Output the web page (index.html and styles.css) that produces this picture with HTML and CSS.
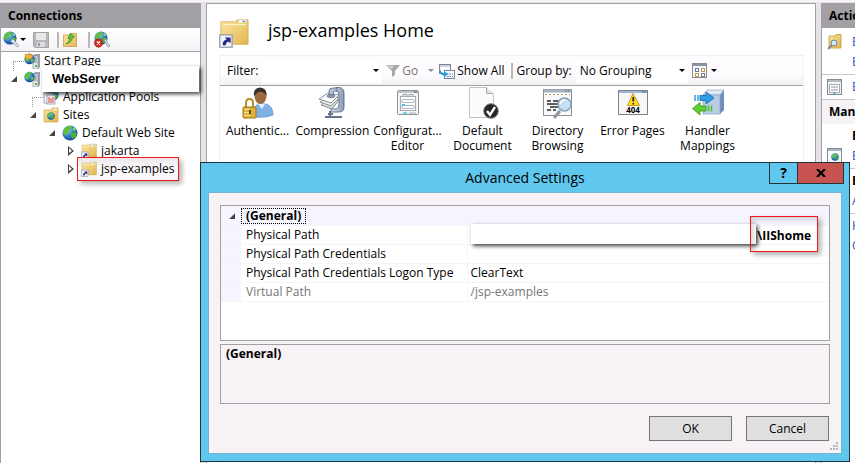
FILE: index.html
```
<!DOCTYPE html>
<html lang="en">
<head>
  <meta charset="utf-8">
  <title>jsp-examples Home</title>
  <link rel="stylesheet" href="styles.css">
</head>
<body>
  <!-- shared shapes -->
  <svg class="defs" width="0" height="0" aria-hidden="true">
    <defs>
      <linearGradient id="gold" x1="0" y1="0" x2="1" y2="1">
        <stop offset="0" stop-color="#fbe7a3"/>
        <stop offset="1" stop-color="#e2b54f"/>
      </linearGradient>
      <radialGradient id="sea" cx="0.35" cy="0.3" r="0.8">
        <stop offset="0" stop-color="#9fd8f7"/>
        <stop offset="0.5" stop-color="#2f7fd0"/>
        <stop offset="1" stop-color="#123a86"/>
      </radialGradient>
      <linearGradient id="steel" x1="0" y1="0" x2="1" y2="0">
        <stop offset="0" stop-color="#e8eef6"/>
        <stop offset="1" stop-color="#8595b0"/>
      </linearGradient>
    </defs>
    <symbol id="globe" viewBox="0 0 16 16">
      <circle cx="8" cy="8" r="7.5" fill="url(#sea)"/>
      <path d="M2 4 Q5 0 9 1 L10 3 L7 5 L8 7 L5 8 L4 11 L1 8 Z" fill="#5fc13a"/>
      <path d="M9 8 L13 7 L15 9 Q14 13 11 14 L9 12 Z" fill="#4fae32"/>
      <path d="M11 2 L14 4 L13 6 L11 5 Z" fill="#8fdc5a"/>
    </symbol>
    <symbol id="folder" viewBox="0 0 16 16">
      <path d="M1 2 H9.500 V1 H15.500 V14 H8 L1 12 Z" fill="url(#gold)" stroke="#cfa64a" stroke-width="0.4"/>
      <path d="M10.500 1.800 H14.500" stroke="#fff" stroke-width="1.2"/>
      <path d="M12.500 1.800 H14" stroke="#4aa3e0" stroke-width="0.8"/>
      <path d="M2 3.500 H14.500" stroke="#fdf2c6" stroke-width="0.6"/>
      <rect x="0.4" y="9" width="6.6" height="6.6" fill="#f2f3f8" stroke="#9aa0b4" stroke-width="0.7"/>
      <path d="M2 14.5 Q1.8 12 4 11.6 L3.2 10.4 H6.2 V13.4 L5.2 12.6 Q3.6 12.8 3.6 14.5 Z" fill="#252c86"/>
    </symbol>
    <symbol id="server" viewBox="0 0 16 16">
      <path d="M9 3 L11 1 H16 V14 L14 16 H9 Z" fill="#98a3ae"/>
      <rect x="9" y="3" width="5" height="13" fill="#dfe5ea" stroke="#7e8993" stroke-width="0.6"/>
      <path d="M10 5 H13 M10 7 H13 M10 9 H13" stroke="#66717c" stroke-width="0.8"/>
      <rect x="11" y="12" width="2" height="2" fill="#5fc13a"/>
      <circle cx="5.5" cy="6" r="5.2" fill="url(#sea)"/>
      <path d="M1 4 Q4 0 7 1 L7 3 L5 5 L5 7 L3 9 L1 7 Z" fill="#5fc13a"/>
      <path d="M7 6 L10 6 L9 9 L7 10 Z" fill="#5fc13a"/>
    </symbol>
  </svg>

  <div class="console">
    <aside class="panel connections">
      <h2 class="panel-title">Connections</h2>
      <div class="toolbar">
        <button class="tool" aria-label="Connect">
          <svg width="17" height="17" viewBox="0 0 17 17"><use href="#globe" width="14" height="14"/><path d="M8 9 L10 8 L12 10 L16 15 L14 16 L10 12 L8 11 Z" fill="#d9e4ee" stroke="#8298ab" stroke-width="0.7"/></svg>
        </button>
        <span class="caret"></span>
        <button class="tool save" aria-label="Save" disabled>
          <svg width="16" height="16" viewBox="0 0 16 16"><path d="M0.5 0.5 H15.5 V15.5 H2 L0.5 14 Z" fill="#b9b7ba" stroke="#a3a1a5"/><rect x="3" y="1" width="10" height="7" fill="#e9e7ea"/><rect x="4" y="10" width="8" height="5" fill="#dcdadd"/><rect x="5" y="11" width="2" height="3" fill="#9a989c"/></svg>
        </button>
        <span class="divider"></span>
        <button class="tool" aria-label="Up">
          <svg width="15" height="15" viewBox="0 0 15 15"><path d="M0.5 3 H8 V1.5 H13.5 V14.5 H0.5 Z" fill="url(#gold)" stroke="#c8a04c" stroke-width="0.8"/><path d="M3 12 Q7 10 7 6 L5 6.5 L7.5 1 L11.5 5 L9.5 5 Q9 10.5 3 12 Z" fill="#62c63a" stroke="#2f8a23" stroke-width="0.7"/></svg>
        </button>
        <span class="divider far"></span>
        <button class="tool" aria-label="Disconnect">
          <svg width="17" height="17" viewBox="0 0 17 17"><use href="#globe" width="14" height="14"/><path d="M10 9 L12 8 L13 11 L16 15 L14 16 Z" fill="#d9e4ee" stroke="#8298ab" stroke-width="0.7"/><circle cx="4.5" cy="12" r="4.2" fill="#d2281e" stroke="#9a1710" stroke-width="0.5"/><path d="M3 10.500 L6 13.500 M6 10.500 L3 13.500" stroke="#fff" stroke-width="1.4"/></svg>
        </button>
      </div>
      <ul class="tree">
        <li class="level-1">
          <span class="branch down"></span>
          <svg class="node" viewBox="0 0 16 16"><use href="#server" width="16" height="16"/><path d="M1 1 L3 2 L5 0 L6 2 L9 2 L8 5 L5 6 L2 6 Z" fill="#f6b23a" stroke="#d98514" stroke-width="0.6"/></svg>
          Start Page
        </li>
        <li class="level-1">
          <span class="toggle open"></span>
          <svg class="node"><use href="#server"/></svg>
        </li>
        <li class="level-2">
          <span class="branch down"></span>
          <svg class="node" viewBox="0 0 16 16"><use href="#globe" x="4" width="12" height="12"/><rect x="1" y="4" width="8" height="10" fill="#f5f6fa" stroke="#8f97ab" stroke-width="0.8"/><rect x="4" y="6" width="8" height="9" fill="#fff" stroke="#8f97ab" stroke-width="0.8"/><path d="M6 8 V14 M8 9 V14 M10 8 V14" stroke="#cf3d2c"/></svg>
          Application Pools
        </li>
        <li class="level-2">
          <span class="toggle open"></span>
          <svg class="node" viewBox="0 0 16 16"><path d="M1 3 H9 V1 H15 V15 H1 Z" fill="url(#gold)" stroke="#cfa64a" stroke-width="0.7"/><path d="M10 2.5 H14" stroke="#fff"/><use href="#globe" x="4" y="5" width="8" height="8"/></svg>
          Sites
        </li>
        <li class="level-3">
          <span class="toggle open"></span>
          <svg class="node"><use href="#globe"/></svg>
          Default Web Site
        </li>
        <li class="level-4">
          <span class="toggle"></span>
          <svg class="node"><use href="#folder"/></svg>
          jakarta
        </li>
        <li class="level-4">
          <span class="toggle"></span>
          <span class="marked">
            <svg class="node"><use href="#folder"/></svg>
            jsp-examples
          </span>
        </li>
      </ul>
      <div class="cover server-name">WebServer</div>
    </aside>

    <main class="panel home">
      <header class="home-title">
        <svg width="30" height="30"><use href="#folder"/></svg>
        <h1>jsp-examples Home</h1>
      </header>
      <section class="features">
        <div class="filter-bar">
          <label for="filter">Filter:</label>
          <span class="combo"><input id="filter" type="text"><span class="caret"></span></span>
          <button class="tool go" disabled>
            <svg width="14" height="13" viewBox="0 0 14 13"><path d="M0 1 H14 L9 7 V11 L6 13 V7 Z" fill="#a9a7aa"/><path d="M1 1.5 H8 L6 5 Z" fill="#cfcdd0"/></svg>
            Go
          </button>
          <span class="caret dim"></span>
          <button class="tool">
            <svg width="16" height="16" viewBox="0 0 16 16"><rect x="0.5" y="1.5" width="11" height="9" fill="#fafbfd" stroke="#7b8594"/><path d="M1 3 H11" stroke="#a4adba"/><rect x="5.5" y="7.5" width="10" height="8" fill="#fafbfd" stroke="#7b8594"/><path d="M8 11 H14 M8 13.5 H14" stroke="#5577b8" stroke-dasharray="1.5 1"/><path d="M1 6 Q2 10 5 10 V8 L9 11 L5 14.5 V12.5 Q0 12 1 6 Z" fill="#2a9be0"/></svg>
            Show All
          </button>
          <span class="divider"></span>
          <label for="group">Group by:</label>
          <span class="combo group"><select id="group"><option>No Grouping</option></select><span class="caret"></span></span>
          <button class="tool" aria-label="View">
            <svg width="15" height="15" viewBox="0 0 15 15"><rect x="0.5" y="0.5" width="14" height="14" fill="#f7f7f9" stroke="#8b898f"/><path d="M1 2 H14" stroke="#8b94a5" stroke-width="2"/><g fill="#fff" stroke="#6c7aa4"><rect x="3.5" y="5.5" width="3" height="3"/><rect x="9.5" y="5.5" width="3" height="3" stroke="#c99a52"/><rect x="3.5" y="10.5" width="3" height="3" stroke="#c99a52"/><rect x="9.5" y="10.5" width="3" height="3"/></g></svg>
          </button>
          <span class="caret"></span>
        </div>
        <ul class="feature-list">
          <li>
            <svg width="32" height="32" viewBox="0 0 32 32"><path d="M12 30 Q10 19 17 17 L24 17 Q31 19 31 28 Q24 31 12 30 Z" fill="#7fb2e4" stroke="#5a8dc6" stroke-width="0.7"/><path d="M16 17 L20 22 L23 17 Z" fill="#e8f2fc"/><ellipse cx="18.500" cy="9" rx="6" ry="8" fill="#9b6a41"/><path d="M12 9 Q11 1 18 0.500 Q25 1 24.500 9 Q22 4 16 5 Z" fill="#38302c"/><path d="M4 20 V16 Q4 12 7.500 12 Q11 12 11 16 V20" fill="none" stroke="#b58d2c" stroke-width="2"/><rect x="1" y="20" width="13" height="11" rx="1" fill="#dfb23e" stroke="#9a7419"/><path d="M2 22.500 H8 M2 25.500 H8 M2 28.500 H8" stroke="#fbe08a"/><rect x="7" y="23" width="2" height="4" fill="#5f4810"/></svg>
            Authentic...
          </li>
          <li>
            <svg width="32" height="32" viewBox="0 0 32 32"><path d="M17 3 Q17 0.500 20 0.500 H22 Q27 1 27 6 V20 Q27 25 22 25 H14 V22 H19 Q22 21 22 18 V8 Q22 4 19 4 Z" fill="url(#steel)" stroke="#5a6b88" stroke-width="0.9"/><path d="M4 18 L15 22 L22 13 L12 11 Z" fill="#dcdde1" stroke="#77787e" stroke-width="0.8"/><path d="M3 15 L14 19 L22 11 L12 9 Z" fill="#eeeef1" stroke="#77787e" stroke-width="0.8"/><path d="M2 12 L14 16 L22 8 L11 6 Z" fill="#fbfbfc" stroke="#77787e" stroke-width="0.8"/><path d="M12 9 V4 Q12 1 16 1 H20 V4 H17 L16 9 Z" fill="#b4c1d5" stroke="#5a6b88" stroke-width="0.8"/><ellipse cx="14" cy="9" rx="4" ry="1.500" fill="#8f9cb3" stroke="#4f5f7b" stroke-width="0.700"/><path d="M13 24 V30 M8 30 H25 M11 27 H16" stroke="#65748e" stroke-width="2"/></svg>
            Compression
          </li>
          <li>
            <svg width="32" height="32" viewBox="0 0 32 32"><rect x="5.500" y="3.500" width="21" height="24" rx="1" fill="#f4f5f6" stroke="#8d9299"/><path d="M6 5 H26" stroke="#bfc4cb" stroke-width="2"/><path d="M22 5 H25" stroke="#4e545c"/><rect x="8.500" y="9.500" width="15" height="14" fill="#fff" stroke="#a5abb2"/><path d="M11 9 V7.500 H15 V9 M17 9 V7.500 H21 V9" stroke="#9ca2aa" fill="none"/><path d="M10 12.500 H22 V15.500 H10 Z M10 18.500 H22 V21.500 H10 Z" fill="#fff" stroke="#b4bac1"/><path d="M10 18 H13" stroke="#3fc9e8" stroke-width="2"/><path d="M11 26 H15" stroke="#3fc9e8" stroke-width="1.500"/><path d="M17 26 H24" stroke="#a4a9b0"/></svg>
            Configurat... Editor
          </li>
          <li>
            <svg width="32" height="32" viewBox="0 0 32 32"><path d="M2.500 0.500 H19 L26.500 7 V30.500 H2.500 Z" fill="#fcfbfd" stroke="#c3c1c6"/><path d="M19.500 0.500 V6.500 H26" fill="#e6e4e9" stroke="#a9a7ad"/><circle cx="24" cy="24" r="7.300" fill="#252528" stroke="#808084"/><path d="M20 24 L23 28 L28 20" fill="none" stroke="#fff" stroke-width="2.400"/></svg>
            Default Document
          </li>
          <li>
            <svg width="32" height="32" viewBox="0 0 32 32"><rect x="1.500" y="2.500" width="28" height="26" fill="#fafafa" stroke="#8b8f96"/><path d="M2 4 H29" stroke="#a8b2c2" stroke-width="3"/><path d="M23 4 H28" stroke="#3c62a0" stroke-dasharray="1.500 1"/><path d="M3 7.500 H28" stroke="#b69f68" stroke-dasharray="2 2"/><path d="M5 14 H9 M11 14 H19 M5 17 H17 M8 20 H17 M5 23 H9 M11 23 H14" stroke="#2b2b2e" stroke-width="1.300"/><path d="M18 24 L12 31" stroke="#8e949d" stroke-width="3"/><circle cx="22.500" cy="17.500" r="6.500" fill="#c2e1f8" stroke="#8ba0b7" stroke-width="1.500"/><path d="M18 17 Q19 13 23 13" stroke="#fff" stroke-width="1.500" fill="none"/></svg>
            Directory Browsing
          </li>
          <li>
            <svg width="32" height="32" viewBox="0 0 32 32"><rect x="1.500" y="3.500" width="29" height="24" fill="#f6f6f8" stroke="#7c8088"/><path d="M2 5 H30" stroke="#a3b5d0" stroke-width="2"/><path d="M25 5 H29" stroke="#31568f" stroke-dasharray="1.500 1"/><path d="M16 6.500 L22.500 18.500 H10.500 Z" fill="#ffdb29" stroke="#c9a012" stroke-linejoin="round"/><path d="M16.300 10 V14.500 M16.300 16 V17.500" stroke="#222" stroke-width="1.700"/><text x="16" y="26" text-anchor="middle" class="code">404</text></svg>
            Error Pages
          </li>
          <li>
            <svg width="32" height="32" viewBox="0 0 32 32"><path d="M11 8 L15 3 H32 L28 8 Z" fill="#dfe9f6" stroke="#8ea4c2" stroke-width="0.700"/><path d="M28 8 L32 3 V23 L28 27 Z" fill="#6f8fba"/><rect x="11" y="8" width="17" height="19" fill="#b9cde6" stroke="#86a0c3" stroke-width="0.700"/><path d="M8 8.500 H14 V5 L22 11 L14 17 V13.500 H8 Z" fill="#2e9fe4" stroke="#1667ae" stroke-width="0.800"/><path d="M3 8 V14 M6 8 V14" stroke="#2e9fe4" stroke-width="1.500"/><path d="M14 19 H8 V15.500 L0.500 21.500 L8 28 V24 H14 Z" fill="#63cf35" stroke="#36931b" stroke-width="0.800"/><path d="M16.500 18.500 V24.500 M19.500 18.500 V24.500" stroke="#4fbf29" stroke-width="1.500"/></svg>
            Handler Mappings
          </li>
        </ul>
      </section>
    </main>

    <aside class="panel actions">
      <h2 class="panel-title">Actions</h2>
      <div class="action-group first">
        <svg width="16" height="16" viewBox="0 0 16 16"><path d="M2 2 H9 V0.500 H14 V14 H2 Z" fill="url(#gold)" stroke="#c8982f" stroke-width="0.800"/><path d="M5 11 L1 15" stroke="#7b8797" stroke-width="2"/><circle cx="7" cy="9" r="3" fill="#cfe8fb" stroke="#6f8298"/></svg>
        <a href="#">Explore</a>
        <a href="#">Edit Permissions...</a>
      </div>
      <div class="action-group">
        <svg width="16" height="16" viewBox="0 0 16 16"><rect x="0.500" y="0.500" width="14" height="15" fill="#f2f4f5" stroke="#868b92"/><path d="M1 2 H14" stroke="#b5bac1" stroke-width="2"/><rect x="2.500" y="5.500" width="10" height="8" fill="#fff" stroke="#a4aab1"/><path d="M4 8 H11 M4 11 H11" stroke="#8d949d"/><path d="M6 14.500 H9" stroke="#3fc9e8"/></svg>
        <a href="#">Basic Settings...</a>
      </div>
      <h3>Manage Virtual Directory</h3>
      <div class="action-group">
        <strong>Browse</strong>
        <svg width="16" height="16" viewBox="0 0 16 16"><rect x="0.500" y="0.500" width="14" height="14" fill="#fafafa" stroke="#868b92"/><path d="M1 2 H14" stroke="#a9b6ca" stroke-width="2"/><use href="#globe" x="4" y="5" width="8" height="8"/></svg>
        <a href="#">Browse</a>
      </div>
      <div class="action-group">
        <strong>Edit</strong>
        <a href="#">Advanced Settings...</a>
      </div>
      <div class="action-group last">
        <a href="#">Help</a>
        <a href="#">Online Help</a>
      </div>
    </aside>
  </div>

  <div class="dialog" role="dialog" aria-labelledby="dialog-title">
    <header class="dialog-bar">
      <h2 id="dialog-title">Advanced Settings</h2>
      <div class="window-buttons">
        <button class="help">?</button>
        <button class="close" aria-label="Close">
          <svg width="10" height="8" viewBox="0 0 10 8"><path d="M1 0 L9 8 M9 0 L1 8" stroke="#000" stroke-width="2.200"/></svg>
        </button>
      </div>
    </header>
    <div class="dialog-body">
      <div class="grid-box">
        <table>
          <colgroup>
            <col class="gutter-col">
            <col class="name-col">
            <col>
          </colgroup>
          <tr class="category">
            <td class="gutter"><span class="toggle open"></span></td>
            <th colspan="2"><span>(General)</span></th>
          </tr>
          <tr>
            <td class="gutter"></td>
            <td class="name">Physical Path</td>
            <td class="path"><span class="cover path-cover"></span><span class="path-end">\IIShome</span></td>
          </tr>
          <tr>
            <td class="gutter"></td>
            <td class="name">Physical Path Credentials</td>
            <td></td>
          </tr>
          <tr>
            <td class="gutter"></td>
            <td class="name">Physical Path Credentials Logon Type</td>
            <td>ClearText</td>
          </tr>
          <tr class="readonly">
            <td class="gutter"></td>
            <td class="name">Virtual Path</td>
            <td>/jsp-examples</td>
          </tr>
        </table>
      </div>
      <div class="description">(General)</div>
      <div class="dialog-buttons">
        <button>OK</button>
        <button>Cancel</button>
      </div>
      <svg class="grip" width="9" height="9" viewBox="0 0 9 9"><path d="M6 1 h2 M6 4 h2 M3 4 h2 M6 7 h2 M3 7 h2 M0 7 h2" stroke="#b9b6bb" stroke-width="2"/></svg>
    </div>
  </div>
</body>
</html>
```
FILE: styles.css
```
* {
  box-sizing: border-box;
}
body {
  margin: 0;
  height: 100vh;
  overflow: hidden;
  background-color: #e5e3e8;
  border-top: 2px solid #f6f2f6;
  color: #000;
  font-family: "Open Sans", "Noto Sans", sans-serif;
  font-size: 12px;
  line-height: 18px;
}
h1, h2, h3, ul {
  margin: 0;
  padding: 0;
}
ul {
  list-style: none;
}
button, input, select {
  font: inherit;
  color: inherit;
}
svg {
  display: block;
  flex: none;
}
.defs {
  position: absolute;
}

/* three console panes */
.console {
  display: grid;
  grid-template-columns: 201px minmax(0, 1fr) 34px;
  grid-template-rows: minmax(0, 1fr);
  gap: 5px;
  height: 100%;
  padding-top: 1px;
}
.panel {
  position: relative;
  background-color: #fff;
  border: 1px solid #a3a0a5;
  border-bottom: none;
}
.panel-title {
  height: 24px;
  padding: 0 7px;
  background-color: #a3a0a5;
  font-size: 12px;
  line-height: 24px;
}
.toolbar {
  display: flex;
  align-items: center;
  height: 24px;
  padding-left: 2px;
  background: linear-gradient(#fff, #f6f2f6);
  border-bottom: 1px solid #a3a0a5;
}
.tool {
  display: flex;
  align-items: center;
  gap: 2px;
  padding: 0;
  border: none;
  background: none;
}
.tool:disabled {
  color: #77757a;
}
.tool.save {
  margin-left: 7px;
}
.caret {
  flex: none;
  border: 3px solid transparent;
  border-top-color: #000;
  border-bottom: none;
}
.caret.dim {
  border-top-color: #8d8b8f;
}
.divider {
  width: 2px;
  height: 16px;
  margin: 0 4px 0 8px;
  background-color: #bab8bc;
}
.divider.far {
  margin-left: 10px;
}

/* connection tree */
.tree li {
  display: flex;
  align-items: center;
  height: 18px;
  white-space: nowrap;
}
.node {
  width: 16px;
  height: 16px;
  margin-right: 4px;
}
.level-1 {
  padding-left: 10px;
}
.level-2 {
  padding-left: 29px;
}
.level-3 {
  padding-left: 48px;
}
.level-4 {
  padding-left: 67px;
}
.branch {
  width: 11px;
  height: 10px;
  margin: 10px 0 0 2px;
  border-top: 1px dotted #97959a;
  border-left: 1px dotted #97959a;
}
.toggle {
  position: relative;
  flex: none;
  width: 13px;
  height: 10px;
}
.toggle::before {
  content: "";
  display: block;
  width: 6px;
  height: 10px;
  background-color: #444;
  clip-path: polygon(0 0, 6px 5px, 0 10px, 0 8px, 1px 7px, 4px 5px, 1px 2px, 1px 8px, 0 8px);
}
.toggle.open::before {
  width: 6px;
  height: 8px;
  clip-path: polygon(6px 2px, 6px 8px, 0 8px);
}
.marked {
  display: flex;
  align-items: center;
  height: 24px;
  margin-left: -4px;
  padding: 0 3px;
  border: 1px solid #f01818;
  background: linear-gradient(#e9e5e9, #fbf8fb 40%);
  box-shadow: 3px 3px 5px rgba(0, 0, 0, 0.3);
}
.cover {
  background-color: #fff;
  box-shadow: 2px 2px 4px rgba(0, 0, 0, 0.75);
}
.server-name {
  position: absolute;
  top: 62px;
  left: 41px;
  right: 1px;
  height: 26px;
  padding-left: 10px;
  font-family: "Liberation Sans", sans-serif;
  font-size: 13px;
  font-weight: bold;
  line-height: 26px;
}

/* home page */
.home {
  display: flex;
  flex-direction: column;
  padding: 0 11px 0 12px;
}
.home-title {
  display: flex;
  gap: 19px;
  height: 51px;
  padding-top: 14px;
}
.home-title h1 {
  font-size: 18px;
  font-weight: normal;
  line-height: 24px;
}
.features {
  flex: 1;
  border: 1px solid #f4f1f5;
  border-bottom: none;
}
.filter-bar {
  display: flex;
  align-items: center;
  height: 30px;
  padding-left: 7px;
  background: linear-gradient(#fefcfe 60%, #f3f0f4);
  border-bottom: 1px solid #a3a0a5;
  white-space: nowrap;
}
.combo {
  display: flex;
  align-items: center;
  width: 120px;
  height: 24px;
  margin: 0 4px;
  padding-right: 3px;
  background-color: #fff;
}
.combo input, .combo select {
  flex: 1;
  min-width: 0;
  height: 20px;
  padding: 0 4px;
  border: none;
  background: none;
  appearance: none;
}
.combo.group {
  width: 112px;
}
.go {
  margin-right: 10px;
}
.caret.dim {
  margin-right: 5px;
}
.filter-bar .divider {
  margin: 0 4px 0 6px;
}
.filter-bar .tool:last-of-type {
  margin-right: 4px;
}
.feature-list {
  display: flex;
  padding-top: 1px;
}
.feature-list li {
  display: flex;
  flex-direction: column;
  align-items: center;
  width: 75px;
  gap: 4px;
  line-height: 15px;
  text-align: center;
}
.code {
  font-size: 8px;
  font-weight: bold;
}

/* actions pane */
.actions {
  overflow: hidden;
  border-right: none;
  white-space: nowrap;
}
.action-group {
  display: grid;
  grid-template-columns: 16px 1fr;
  column-gap: 9px;
  align-items: center;
  padding: 2px 0 2px 5px;
  line-height: 20px;
  border-bottom: 1px solid #c9c7cb;
}
.action-group.first {
  padding-top: 4px;
}
.action-group.last {
  border-bottom: none;
}
.action-group a, .action-group strong {
  grid-column: 2;
}
.action-group a {
  color: #1c56c4;
  text-decoration: none;
}
.actions h3 {
  padding-left: 7px;
  background-color: #f6f2f6;
  font-size: 12px;
  line-height: 24px;
}

/* advanced settings window */
.dialog {
  position: absolute;
  top: 162px;
  left: 200px;
  right: 5px;
  padding: 0 7px 7px;
  border: 1px solid #26333a;
  background-color: #60c8ee;
}
.dialog-bar {
  position: relative;
  height: 29px;
}
.dialog-bar h2 {
  font-size: 14px;
  font-weight: normal;
  line-height: 29px;
  text-align: center;
}
.window-buttons {
  position: absolute;
  top: -1px;
  right: -2px;
  display: flex;
}
.window-buttons button {
  display: flex;
  align-items: center;
  justify-content: center;
  width: 29px;
  height: 22px;
  padding: 0;
  border: 1px solid #26333a;
  background: none;
  font-size: 14px;
  font-weight: bold;
}
.window-buttons .close {
  width: 47px;
  margin-left: -1px;
  background-color: #c75450;
}
.dialog-body {
  position: relative;
  padding: 12px 11px;
  border: 1px solid #74b3cf;
  background-color: #f6f2f6;
}
.grid-box {
  height: 136px;
  border: 1px solid #a3a0a5;
  background-color: #fff;
}
table {
  width: 100%;
  border-collapse: collapse;
  table-layout: fixed;
}
.gutter-col {
  width: 20px;
}
.name-col {
  width: 226px;
}
td, th {
  height: 19px;
  padding: 0 3px;
  border-bottom: 1px solid #f4f4fd;
  line-height: 18px;
  text-align: left;
}
.category, .gutter {
  background-color: #f5f5fe;
}
td.gutter .toggle {
  display: block;
  width: 6px;
  height: 8px;
  margin-left: 5px;
}
.category th {
  padding: 0;
}
.category span:not(.toggle) {
  display: inline-block;
  padding: 0 4px;
  border: 1px dotted #000;
  line-height: 14px;
  vertical-align: middle;
}
td.name {
  padding: 0 0 0 5px;
  border-right: 1px solid #f4f4fd;
}
.path {
  position: relative;
}
.path-cover {
  position: absolute;
  top: -2px;
  left: 3px;
  right: 73px;
  height: 20px;
}
.path-end {
  position: absolute;
  top: -10px;
  right: 11px;
  width: 68px;
  height: 36px;
  padding-right: 6px;
  border: 1px solid #f01818;
  box-shadow: 3px 3px 5px rgba(0, 0, 0, 0.3), inset 3px 3px 5px rgba(0, 0, 0, 0.15);
  font-weight: bold;
  line-height: 38px;
  text-align: right;
}
.readonly {
  color: #77757a;
}
.description {
  height: 60px;
  margin-top: 3px;
  padding: 0 5px;
  border: 1px solid #a3a0a5;
  font-weight: bold;
}
.dialog-buttons {
  display: flex;
  justify-content: flex-end;
  gap: 14px;
  padding: 12px 1px 0 0;
}
.dialog-buttons button {
  width: 83px;
  height: 25px;
  border: 1px solid #77757a;
  background-color: #dfdfdf;
}
.grip {
  position: absolute;
  right: 2px;
  bottom: 2px;
}
```
